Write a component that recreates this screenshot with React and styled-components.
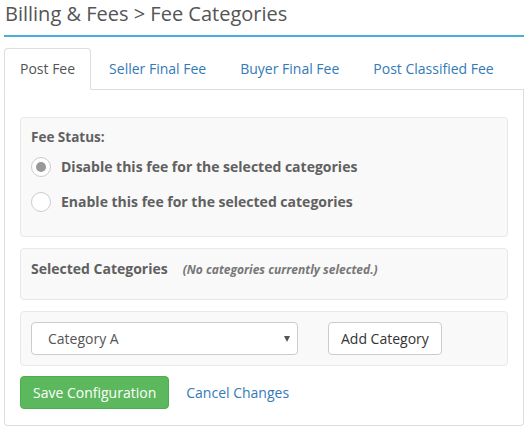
import styled, { createGlobalStyle } from 'styled-components';

const GlobalStyle = createGlobalStyle`
	body {
		margin: 0;
		background: #fff;
		font-family: "Open Sans", "Liberation Sans", sans-serif;
		color: #555;
	}
	* {
		box-sizing: border-box;
	}
`;

const Page = styled.div`
	width: 528px;
	padding: 0 4px;
`;

const Title = styled.h2`
	margin: 0;
	padding: 0 0 7px 1px;
	font-size: 20px;
	font-weight: 400;
	line-height: 28px;
	color: #555;
	border-bottom: 2px solid #4aafdf;
`;

const TabList = styled.ul`
	display: flex;
	margin: 11px 0 0;
	padding: 0;
	list-style: none;
	border-bottom: 1px solid #ddd;
`;

const Tab = styled.li`
	margin: 0 2px -1px 0;
	padding: 10px 15px;
	font-size: 14px;
	line-height: 20px;
	border: 1px solid transparent;
	border-radius: 4px 4px 0 0;
	color: #337ab7;
	cursor: pointer;

	${(props) =>
		props.active &&
		`
		color: #555;
		background: #fff;
		border-color: #ddd #ddd transparent;
	`}
`;

const TabContent = styled.div`
	padding: 27px 15px 16px;
	border: 1px solid #ddd;
	border-top: none;
	border-radius: 0 0 4px 4px;
`;

const Panel = styled.div`
	margin-bottom: ${(props) => props.gap || '11px'};
	padding: ${(props) => props.pad || '10px'};
	background: #f9f9f9;
	border: 1px solid #e8e8e8;
	border-radius: 4px;
`;

const Label = styled.div`
	font-size: 13.5px;
	font-weight: 700;
	line-height: 18px;
	color: #606060;
	margin-bottom: 3px;
`;

const RadioRow = styled.label`
	display: flex;
	align-items: center;
	height: 35px;
	font-size: 14px;
	font-weight: 700;
	color: #606060;
	cursor: pointer;
`;

const RadioDot = styled.span`
	position: relative;
	width: 20px;
	height: 20px;
	margin-right: 10px;
	border: 1px solid #ccc;
	border-radius: 50%;
	background: #fff;

	${(props) =>
		props.checked &&
		`
		&::after {
			content: '';
			position: absolute;
			left: 4px;
			top: 4px;
			width: 10px;
			height: 10px;
			border-radius: 50%;
			background: #999;
		}
	`}
`;

const Heading = styled.div`
	display: flex;
	align-items: baseline;
	font-size: 14px;
	font-weight: 700;
	line-height: 20px;
	color: #606060;
`;

const Note = styled.span`
	margin-left: 15px;
	font-size: 12px;
	font-style: italic;
	color: #777;
`;

const FormRow = styled.div`
	display: flex;
	align-items: center;
	gap: 30px;
`;

const SelectWrap = styled.div`
	position: relative;
	width: 267px;
`;

const Select = styled.select`
	width: 100%;
	height: 33px;
	padding: 0 16px;
	font-family: inherit;
	font-size: 14px;
	color: #555;
	background: #fff;
	border: 1px solid #ccc;
	border-radius: 4px;
	appearance: none;
	outline: none;
`;

const Arrow = styled.span`
	position: absolute;
	right: 8px;
	top: 14px;
	width: 0;
	height: 0;
	border-left: 3px solid transparent;
	border-right: 3px solid transparent;
	border-top: 6px solid #555;
	pointer-events: none;
`;

const Button = styled.button`
	height: 33px;
	padding: 0 12px;
	font-family: inherit;
	font-size: 14px;
	color: #333;
	white-space: nowrap;
	background: #fff;
	border: 1px solid #ccc;
	border-radius: 4px;
	cursor: pointer;
`;

const SaveButton = styled(Button)`
	padding: 0 12px;
	color: #fff;
	background: #5cb85c;
	border-color: #4cae4c;
`;

const Actions = styled.div`
	display: flex;
	align-items: center;
	gap: 17px;
`;

const LinkButton = styled.a`
	font-size: 14px;
	color: #337ab7;
	text-decoration: none;
	cursor: pointer;
`;

const tabs = ['Post Fee', 'Seller Final Fee', 'Buyer Final Fee', 'Post Classified Fee'];

const App = () => {
	return (
		<Page>
			<GlobalStyle />
			<Title>Billing &amp; Fees &gt; Fee Categories</Title>
			<TabList>
				{tabs.map((tab, i) => (
					<Tab key={tab} active={i === 0}>
						{tab}
					</Tab>
				))}
			</TabList>
			<TabContent>
				<Panel pad="10px 10px 17px">
					<Label>Fee Status:</Label>
					<RadioRow>
						<RadioDot checked />
						Disable this fee for the selected categories
					</RadioRow>
					<RadioRow>
						<RadioDot />
						Enable this fee for the selected categories
					</RadioRow>
				</Panel>
				<Panel pad="10px 10px 19px">
					<Heading>
						Selected Categories
						<Note>(No categories currently selected.)</Note>
					</Heading>
				</Panel>
				<Panel gap="10px">
					<FormRow>
						<SelectWrap>
							<Select defaultValue="a">
								<option value="a">Category A</option>
								<option value="b">Category B</option>
							</Select>
							<Arrow />
						</SelectWrap>
						<Button>Add Category</Button>
					</FormRow>
				</Panel>
				<Actions>
					<SaveButton>Save Configuration</SaveButton>
					<LinkButton>Cancel Changes</LinkButton>
				</Actions>
			</TabContent>
		</Page>
	);
};

export default App;
